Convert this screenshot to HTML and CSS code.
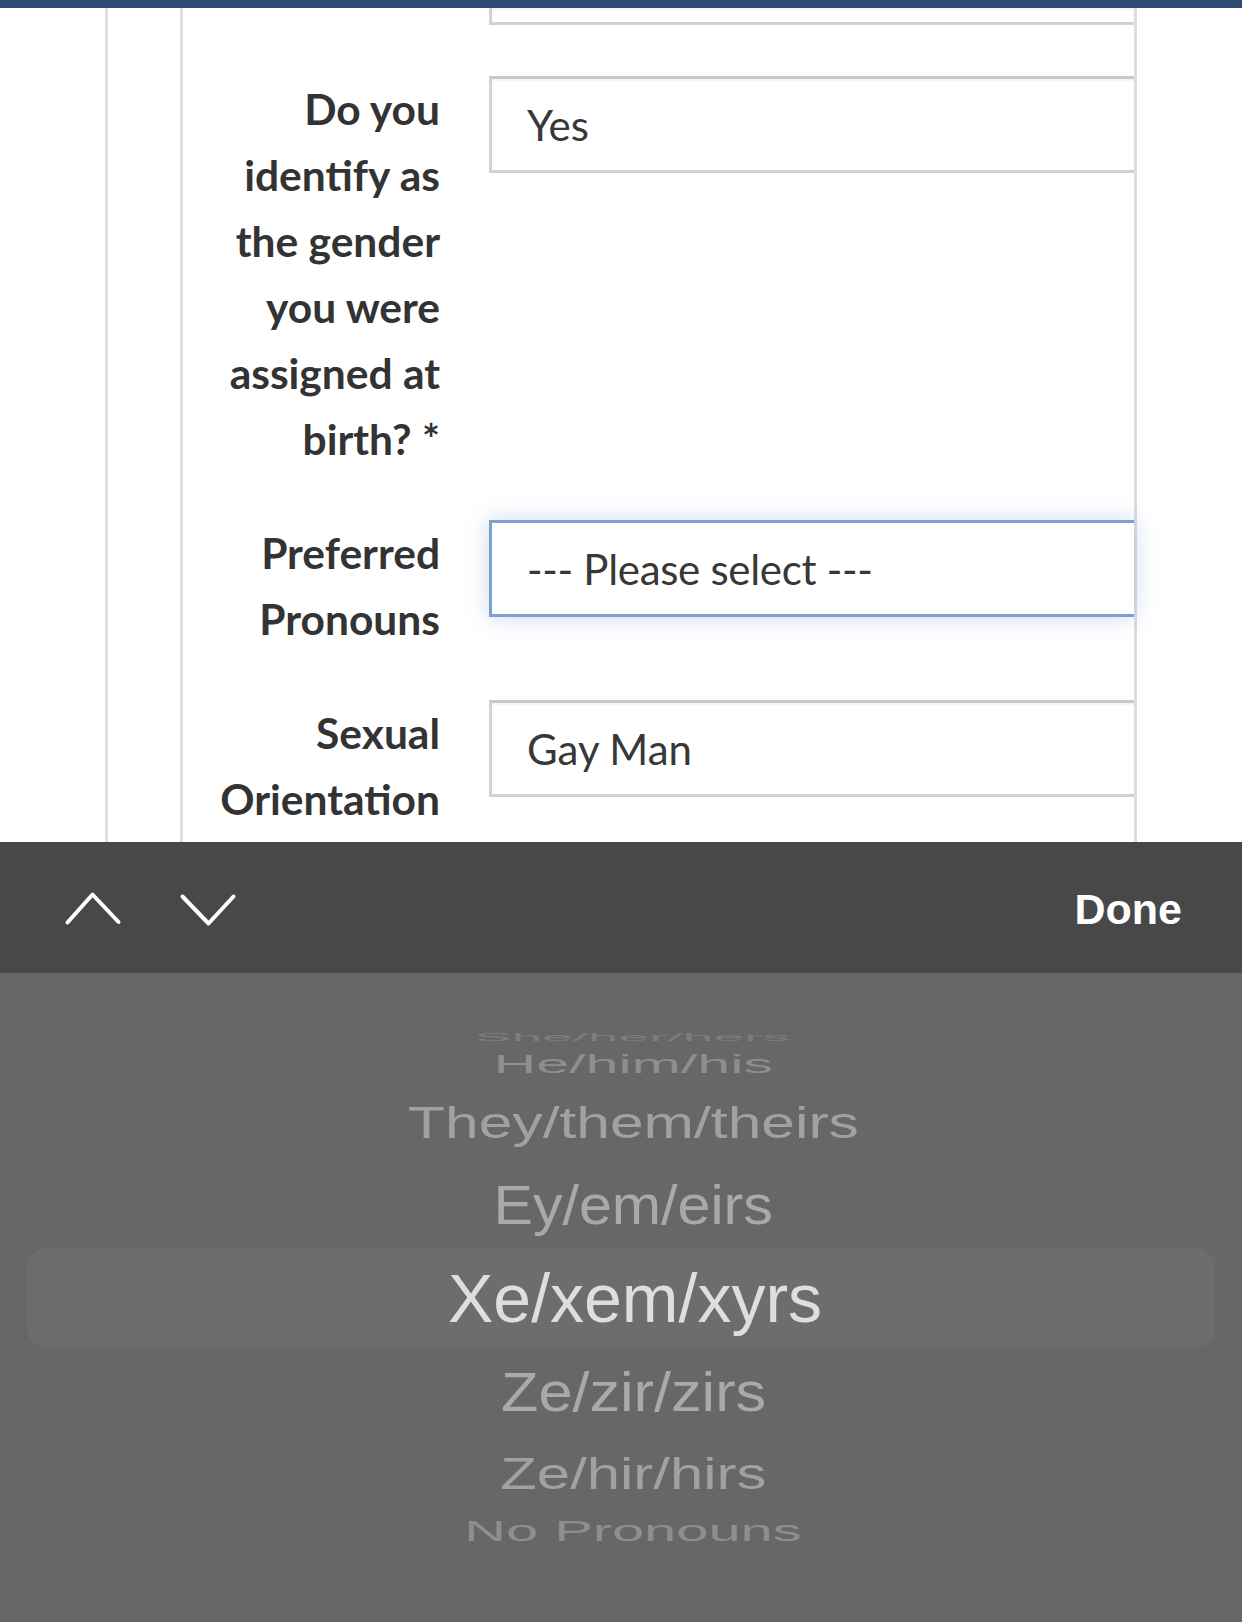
FILE: index.html
```
<!doctype html>
<html>
<head>
    <meta charset="utf-8">
    <title>Registrace</title>
    <link rel="stylesheet" href="styles.css">
</head>

<body>
    <div class="page">
        <div class="topbar"></div>
        <div class="outer">
            <div class="panel">
                <div class="row row-cut">
                    <div class="label"></div>
                    <div class="field field-cut"></div>
                </div>
                <div class="row">
                    <label class="label">Do you identify as the gender you were assigned at birth? *</label>
                    <div class="field">Yes</div>
                </div>
                <div class="row">
                    <label class="label">Preferred Pronouns</label>
                    <div class="field focus">--- Please select ---</div>
                </div>
                <div class="row">
                    <label class="label">Sexual Orientation</label>
                    <div class="field">Gay Man</div>
                </div>
            </div>
        </div>
    </div>

    <div class="accessory">
        <div class="arrows">
            <svg class="arrow" width="60" height="36" viewBox="0 0 60 36">
                <polyline points="4.5,32.5 29.5,4.5 55.5,32" />
            </svg>
            <svg class="arrow arrow-down" width="58" height="36" viewBox="0 0 58 36">
                <polyline points="3.5,4.5 29.5,31.5 54.5,4.5" />
            </svg>
        </div>
        <div class="done">Done</div>
    </div>

    <div class="picker">
        <div class="item it-she">She/her/hers</div>
        <div class="item it-he">He/him/his</div>
        <div class="item it-they">They/them/theirs</div>
        <div class="item it-ey">Ey/em/eirs</div>
        <div class="item it-xe">Xe/xem/xyrs</div>
        <div class="item it-ze">Ze/zir/zirs</div>
        <div class="item it-hir">Ze/hir/hirs</div>
        <div class="item it-no">No Pronouns</div>
    </div>
</body>
</html>
```

FILE: styles.css
```
* {
  box-sizing: border-box;
}

html, body {
  margin: 0;
  padding: 0;
}

body {
  width: 1242px;
  height: 1622px;
  overflow: hidden;
  background: #ffffff;
  font-family: "Lato", "Liberation Sans", sans-serif;
}

/* page under the keyboard */
.page {
  height: 842px;
  overflow: hidden;
  display: flex;
  flex-direction: column;
}

.topbar {
  flex: 0 0 8px;
  background-color: #2e4a72;
}

.outer {
  flex: 1;
  min-height: 0;
  margin-left: 105px;
  padding-left: 72px;
  border-left: 3px solid #dddddd;
}

.panel {
  width: 957px;
  height: 100%;
  border-left: 3px solid #dddddd;
  border-right: 3px solid #dddddd;
}

.row {
  display: grid;
  grid-template-columns: 257px 1fr;
  column-gap: 49px;
  align-items: start;
  margin-bottom: 48px;
}

.row-cut {margin-bottom: 51px;}

.label {
  display: block;
  text-align: right;
  font-weight: bold;
  font-size: 42.5px;
  line-height: 66px;
  color: #333333;
}

.field {
  height: 97px;
  padding-left: 35px;
  border: 3px solid #d2d2d2;
  border-top-color: #c9c9c9;
  border-right: none;
  box-shadow: inset 0 2px 2px rgba(0,0,0,0.05);
  font-size: 42px;
  line-height: 92px;
  color: #383838;
  background: #ffffff;
}

.field-cut {
  height: 17px;
  border-top: none;
}

.focus {
  border-color: #7ba1d1;
  box-shadow: 0 0 22px rgba(102,150,215,0.35);
  letter-spacing: -0.3px;
}

/* keyboard accessory bar */
.accessory {
  height: 131px;
  background-color: #484848;
  display: flex;
  align-items: center;
  justify-content: space-between;
  padding: 0 60px 0 63px;
}

.arrows {
  display: flex;
  align-items: center;
  gap: 56px;
}

.arrow polyline {
  fill: none;
  stroke: #ffffff;
  stroke-width: 4;
  stroke-linecap: round;
  stroke-linejoin: round;
}

.arrow-down {margin-top: 4px;}

.done {
  margin-top: 4px;
  font: bold 43px "Liberation Sans", Arial, sans-serif;
  color: #ffffff;
}

/* wheel picker */
.picker {
  height: 649px;
  background-color: #676767;
  padding: 58px 27px 0 27px;
  font-family: "Liberation Sans", Arial, sans-serif;
}

.item {
  padding-left: 28px;
  text-align: center;
  white-space: nowrap;
  font-size: 68px;
}

.it-she  {height: 13px;  line-height: 13px;  color: #7d7d7d; transform: scale(0.81, 0.16);}
.it-he   {height: 40px;  line-height: 40px;  color: #8e8e8e; transform: scale(0.87, 0.38);}
.it-they {height: 78px;  line-height: 78px;  color: #a1a1a1; transform: scale(0.89, 0.64);}
.it-ey   {height: 86px;  line-height: 86px;  color: #a9a9a9; transform: scale(0.87, 0.81);}
.it-xe   {height: 100px; line-height: 100px; color: #dedee0; background: #6d6d6f; border-radius: 20px;}
.it-ze   {height: 88px;  line-height: 88px;  color: #a9a9a9; transform: scale(0.9, 0.81);}
.it-hir  {height: 75px;  line-height: 75px;  color: #a1a1a1; transform: scale(0.88, 0.64);}
.it-no   {height: 40px;  line-height: 40px;  color: #8e8e8e; transform: scale(0.85, 0.43);}
```
